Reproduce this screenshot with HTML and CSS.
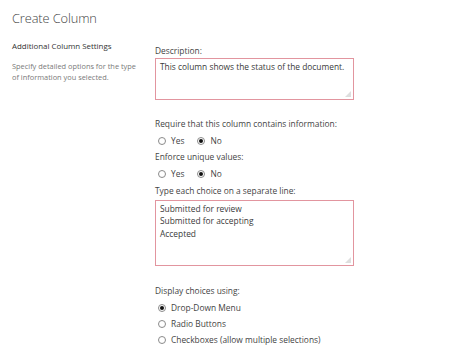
FILE: index.html
```html
<!DOCTYPE html>
<html>
<head>
<meta charset="utf-8">
<link rel="stylesheet" href="styles.css">
</head>
<body>
<div class="page">
  <h1 class="title">Create Column</h1>
  <div class="section">
    <div class="side">
      <div class="side-head">Additional Column Settings</div>
      <div class="side-desc">Specify detailed options for the type of information you selected.</div>
    </div>
    <div class="main">
      <div class="label first">Description:</div>
      <div class="box box-desc">
        <div class="box-line">This column shows the status of the document.</div>
        <span class="grip"></span>
      </div>
      <div class="label req">Require that this column contains information:</div>
      <div class="radios">
        <span class="opt"><span class="radio"></span>Yes</span>
        <span class="opt"><span class="radio on"></span>No</span>
      </div>
      <div class="label">Enforce unique values:</div>
      <div class="radios">
        <span class="opt"><span class="radio"></span>Yes</span>
        <span class="opt"><span class="radio on"></span>No</span>
      </div>
      <div class="label type">Type each choice on a separate line:</div>
      <div class="box box-choices">
        <div class="box-line">Submitted for review</div>
        <div class="box-line">Submitted for accepting</div>
        <div class="box-line">Accepted</div>
        <span class="grip"></span>
      </div>
      <div class="label disp">Display choices using:</div>
      <div class="stack">
        <span class="opt"><span class="radio on"></span>Drop-Down Menu</span>
        <span class="opt"><span class="radio"></span>Radio Buttons</span>
        <span class="opt"><span class="radio"></span>Checkboxes (allow multiple selections)</span>
      </div>
    </div>
  </div>
</div>
</body>
</html>
```
FILE: styles.css
```css
html, body {
  margin: 0;
  padding: 0;
  background: #ffffff;
}
body {
  font-family: "Open Sans", "Noto Sans", sans-serif;
  color: #444444;
  width: 474px;
  height: 356px;
  overflow: hidden;
}
.page {
  padding: 8px 0 0 12px;
}
.title {
  margin: 0;
  font-size: 12.8px;
  font-weight: 300;
  color: #444444;
  line-height: 20px;
  letter-spacing: -0.1px;
}
.section {
  display: flex;
  margin-top: 12px;
}
.side {
  width: 143px;
  flex: none;
}
.side-head {
  font-size: 7.9px;
  color: #333333;
  line-height: 12px;
  white-space: nowrap;
}
.side-desc {
  margin-top: 9px;
  font-size: 7.4px;
  color: #7a7a7a;
  line-height: 11px;
  width: 130px;
}
.main {
  width: 300px;
  font-size: 8.4px;
  line-height: 12px;
  white-space: nowrap;
}
.label {
  color: #444444;
  margin-top: 3px;
}
.label.first {
  margin-top: 5px;
}
.label.req {
  margin-top: 18px;
}
.label.type {
  margin-top: 4px;
}
.label.disp {
  margin-top: 19px;
}
.box {
  position: relative;
  box-sizing: border-box;
  width: 199px;
  border: 1px solid #e2959f;
  padding: 2px 4px;
  color: #3a3a3a;
  margin-top: 1px;
}
.box-desc {
  height: 42px;
}
.box-choices {
  height: 66px;
  margin-top: 3px;
  padding-top: 1.6px;
  line-height: 12.7px;
}
.grip {
  position: absolute;
  right: 2px;
  bottom: 2px;
  width: 6px;
  height: 6px;
  background:
    radial-gradient(circle, #b8b8b8 0.6px, transparent 0.8px) 0 0 / 2px 2px;
  clip-path: polygon(100% 0, 100% 100%, 0 100%);
}
.radios {
  display: flex;
  gap: 13px;
  height: 14px;
  margin-top: 4px;
  padding-left: 3px;
}
.stack {
  display: flex;
  flex-direction: column;
  gap: 2px;
  margin-top: 4px;
  padding-left: 3px;
}
.opt {
  display: flex;
  align-items: center;
  gap: 5px;
  height: 14px;
  color: #444444;
}
.radio {
  box-sizing: border-box;
  width: 8px;
  height: 8px;
  border: 1px solid #8a8a8a;
  border-radius: 50%;
  display: inline-flex;
  align-items: center;
  justify-content: center;
  flex: none;
}
.radio.on::after {
  content: "";
  width: 4px;
  height: 4px;
  border-radius: 50%;
  background: #111111;
}
```
